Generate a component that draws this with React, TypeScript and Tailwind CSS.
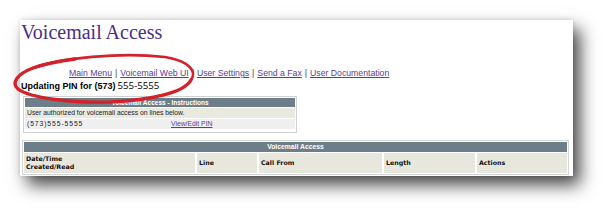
import React from "react";

const sans = "font-['Liberation_Sans',Arial,sans-serif]";

function NavLink({ children }: { children: React.ReactNode }) {
  return <span className="text-[#5b3b9b] underline decoration-[0.5px] underline-offset-[1px]">{children}</span>;
}

function Sep() {
  return <span className="text-[#444] px-[3px]">|</span>;
}

export default function App() {
  const cols = [
    { w: "w-[171px]", label: (<><div>Date/Time</div><div>Created/Read</div></>) },
    { w: "w-[60px]", label: "Line" },
    { w: "w-[123px]", label: "Call From" },
    { w: "w-[91px]", label: "Length" },
    { w: "flex-1", label: "Actions" },
  ];
  return (
    <div className="w-[616px] h-[220px] bg-white overflow-hidden">
      <div className="relative ml-[20px] mt-[20px] w-[553px] h-[156px] bg-white shadow-[0_0_4px_rgba(0,0,0,0.12),7px_9px_16px_rgba(0,0,0,0.72)]">
        <h1 className="pl-[1px] pt-[1px] text-[20px] leading-[23px] text-[#4c2c8a] font-['Liberation_Serif','Times_New_Roman',serif]">
          Voicemail Access
        </h1>
        <div className={`${sans} pl-[49px] mt-[25px] h-[9px] text-[8.7px] leading-[9px] whitespace-nowrap`}>
          <NavLink>Main Menu</NavLink>
          <Sep />
          <NavLink>Voicemail Web UI</NavLink>
          <Sep />
          <NavLink>User Settings</NavLink>
          <Sep />
          <NavLink>Send a Fax</NavLink>
          <Sep />
          <NavLink>User Documentation</NavLink>
        </div>
        <div className="pl-[1px] mt-[2px] h-[11px] flex items-baseline whitespace-nowrap text-black">
          <span className={`${sans} font-bold text-[9px] leading-[11px]`}>Updating PIN for (573)</span>
          <span className="font-['Open_Sans',sans-serif] text-[9.7px] leading-[11px] pl-[2px]">555-5555</span>
        </div>

        <div className={`${sans} ml-[3px] mt-[5px] w-[274px] border border-[#cfd3d6] p-[1px] pb-[3px]`}>
          <div className="h-[9px] bg-[#6d7e89] text-white font-bold text-[6.5px] leading-[9px] text-center">
            Voicemail Access - Instructions
          </div>
          <div className="mt-[1px] h-[10px] bg-[#e9e9e0] text-[6.8px] leading-[10px] pl-[2px] text-[#222]">
            User authorized for voicemail access on lines below.
          </div>
          <div className="mt-[1px] h-[10px] bg-[#efefef] text-[6.8px] leading-[10px] pl-[2px] flex text-[#222]">
            <span className="w-[144px] tracking-[0.9px]">(573)555-5555</span>
            <span className="text-[#5b3b9b] underline">View/Edit PIN</span>
          </div>
        </div>

        <div className={`${sans} ml-[2px] mt-[7px] w-[547px] border border-[#d3d6d8] p-[1px]`}>
          <div className="h-[10px] bg-[#6d7e89] text-white font-bold text-[6.8px] leading-[10px] text-center">
            Voicemail Access
          </div>
          <div className="flex gap-[2px] mt-[1px]">
            {cols.map((c, i) => (
              <div key={i} className={`${c.w} h-[20px] bg-[#e8e7de] pl-[2px] flex flex-col justify-center font-['DejaVu_Sans',sans-serif] font-bold text-[6.3px] leading-[8px] text-[#111]`}>
                {c.label}
              </div>
            ))}
          </div>
        </div>

        <svg className="absolute left-[-10px] top-[32px] pointer-events-none" width="190" height="76" viewBox="0 0 190 76">
          <g transform="translate(-10,-52)" fill="none" stroke="#d3222a" strokeLinecap="round">
            <path strokeWidth="2.6" d="M 33 68 C 60 58, 120 52, 165 57 C 190 61, 197 72, 191 80" />
            <path strokeWidth="3.4" d="M 191 80 C 184 93, 150 100, 110 102 C 70 103, 30 98, 18 89 C 11 83, 17 74, 33 68 C 45 64, 60 61, 75 59" />
          </g>
        </svg>
      </div>
    </div>
  );
}
